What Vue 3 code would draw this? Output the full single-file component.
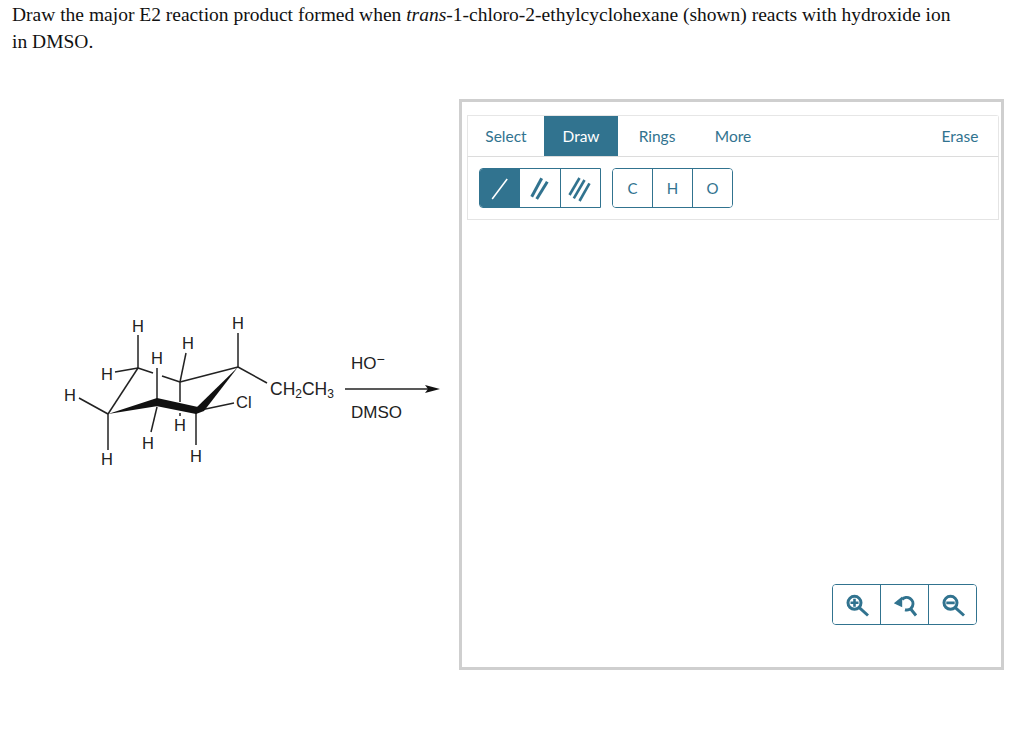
<script setup>
const tabs = ['Select', 'Draw', 'Rings', 'More']
const atoms = ['C', 'H', 'O']
const hLabels = [
  [138, 332], [238, 329], [188, 349], [157, 364], [107, 380], [70, 401],
  [180, 431], [148, 449], [107, 465], [196, 462]
]
const bonds = [
  [138, 368, 138, 335], [115, 372, 138, 368], [138, 368, 108, 414],
  [138, 368, 153, 373], [162, 376, 180, 382], [180, 382, 186, 353],
  [180, 382, 238, 367], [238, 367, 238, 333], [238, 367, 267, 383],
  [108, 414, 108, 450], [79, 398, 108, 414], [157, 368, 157, 402],
  [157, 407, 151, 432], [196, 411, 196, 445], [180, 382, 180, 402],
  [180, 413, 180, 416], [196, 411, 234, 403]
]
</script>

<template>
  <main class="page">
    <p class="question">
      Draw the major E2 reaction product formed when <i>trans</i>-1-chloro-2-ethylcyclohexane (shown) reacts with hydroxide ion in DMSO.
    </p>
    <div class="row">
      <svg class="scheme" viewBox="0 99 459 571" width="459" height="571">
        <g stroke="#222" stroke-width="1.5" fill="none">
          <line v-for="(b, i) in bonds" :key="i" :x1="b[0]" :y1="b[1]" :x2="b[2]" :y2="b[3]" />
          <line x1="345" y1="389" x2="428" y2="389" />
        </g>
        <g fill="#111">
          <polygon points="108,414 157,398 158,406" />
          <polygon points="157,398 198,407 196,414 156,406" />
          <polygon points="238,367 196,408 196,414 204,411" />
          <polygon points="425,385 440,389 425,393 428,389" />
        </g>
        <g class="chem">
          <text v-for="(h, i) in hLabels" :key="i" :x="h[0]" :y="h[1]" text-anchor="middle">H</text>
          <text x="236" y="408">Cl</text>
          <text class="ethyl" x="270" y="395">CH<tspan class="sub" dy="3">2</tspan><tspan dy="-3">CH</tspan><tspan class="sub" dy="3">3</tspan></text>
          <text class="reagent" x="351" y="369">HO<tspan class="minus" dy="-5">−</tspan></text>
          <text class="reagent" x="351" y="418">DMSO</text>
        </g>
      </svg>

      <section class="panel">
        <div class="toolbar">
          <div class="tabs">
            <button v-for="t in tabs" :key="t" class="tab" :class="{ active: t === 'Draw' }">{{ t }}</button>
            <button class="tab erase">Erase</button>
          </div>
          <div class="tools">
            <div class="group bonds">
              <button class="tool on">
                <svg width="24" height="24" viewBox="0 0 24 24"><line x1="4.2" y1="23" x2="19.2" y2="3" stroke="#fff" stroke-width="1.6" /></svg>
              </button>
              <button class="tool">
                <svg width="24" height="24" viewBox="0 0 24 24" stroke="#31738f" stroke-width="3"><line x1="3.7" y1="20.7" x2="13.7" y2="2.3" /><line x1="8.7" y1="23" x2="19.3" y2="5.7" /></svg>
              </button>
              <button class="tool">
                <svg width="28" height="28" viewBox="0 0 28 28" stroke="#31738f" stroke-width="2.6"><line x1="3.5" y1="21" x2="13.5" y2="4" /><line x1="7.8" y1="24.3" x2="18.5" y2="6" /><line x1="13.5" y1="27" x2="23.5" y2="9.3" /></svg>
              </button>
            </div>
            <div class="group atoms">
              <button v-for="a in atoms" :key="a" class="tool">{{ a }}</button>
            </div>
          </div>
        </div>
        <div class="canvas">
          <div class="group zoom">
            <button class="tool">
              <svg width="26" height="26" viewBox="0 0 26 26" fill="none" stroke="#31738f">
                <circle cx="10.5" cy="10.8" r="6.5" stroke-width="3" />
                <line x1="15.3" y1="15.6" x2="24" y2="23.5" stroke-width="3" />
                <path d="M6.5 10.8h8M10.5 6.8v8" stroke-width="2.6" />
              </svg>
            </button>
            <button class="tool">
              <svg width="26" height="26" viewBox="0 0 26 26" fill="none" stroke="#31738f">
                <path d="M10 7.5A6.3 6.3 0 1 1 13 17.8" stroke-width="3" />
                <line x1="18.5" y1="16.8" x2="24" y2="23.5" stroke-width="3" />
                <polygon points="1.8,11.2 10.2,4.5 10.2,15.2" fill="#31738f" stroke="none" />
              </svg>
            </button>
            <button class="tool">
              <svg width="26" height="26" viewBox="0 0 26 26" fill="none" stroke="#31738f">
                <circle cx="10.5" cy="10.8" r="6.5" stroke-width="3" />
                <line x1="15.3" y1="15.6" x2="24" y2="23.5" stroke-width="3" />
                <path d="M6.3 10.8h8.4" stroke-width="2.8" />
              </svg>
            </button>
          </div>
        </div>
      </section>
    </div>
  </main>
</template>

<style>
html, body { background: #fff; }
</style>

<style scoped>
.page { width: 1024px; height: 751px; overflow: hidden; }
.question {
  margin: 0;
  padding: 1px 60px 0 12px;
  height: 99px;
  box-sizing: border-box;
  font: 19.5px/27px "Liberation Serif", serif;
  color: #111;
}
.row { display: flex; }
.scheme { flex: none; display: block; }
.chem text { font: 16.5px "Liberation Sans", sans-serif; fill: #222; }
.chem .reagent { font-size: 17px; }
.chem .ethyl { font-size: 17.5px; }
.chem .sub { font-size: 12px; }
.chem .minus { font-size: 14px; }
.panel {
  width: 545px;
  height: 571px;
  box-sizing: border-box;
  border: 3px solid #cfcfcf;
  padding: 13px 2px 0 5px;
  display: flex;
  flex-direction: column;
}
.toolbar { flex: none; }
button { font-family: "Lato", sans-serif; margin: 0; background: #fff; }
.tabs {
  display: flex;
  height: 42px;
  box-sizing: border-box;
  border: 1px solid #e6e6e6;
  border-bottom-color: #dcdcdc;
  border-radius: 0 3px 0 0;
}
.tab {
  width: 76px;
  border: 0;
  font-size: 15.5px;
  color: #31738f;
}
.tab.active { background: #31738f; color: #fff; width: 74px; margin-right: 1px; }
.tab.erase { margin-left: auto; }
.tools {
  display: flex;
  gap: 11px;
  height: 63px;
  box-sizing: border-box;
  padding: 11px 11px 0;
  border: 1px solid #e4e4e4;
  border-top: 0;
}
.group {
  display: flex;
  height: 41px;
  box-sizing: border-box;
  border: 1px solid #31738f;
  border-radius: 4px;
  overflow: hidden;
}
.bonds { width: 122px; height: 40px; border-radius: 4px 0 0 4px; }
.atoms { width: 121px; height: 40px; }
.tool {
  flex: 1;
  display: flex;
  align-items: center;
  justify-content: center;
  padding: 0;
  border: 0;
  border-left: 1px solid #31738f;
  color: #31738f;
  font-size: 15px;
}
.tool:first-child { border-left: 0; }
.tool.on { background: #31738f; }
.canvas {
  flex: 1;
  display: flex;
  align-items: flex-end;
  justify-content: flex-end;
  padding: 0 22px 42px 0;
}
.zoom { width: 145px; }
</style>
